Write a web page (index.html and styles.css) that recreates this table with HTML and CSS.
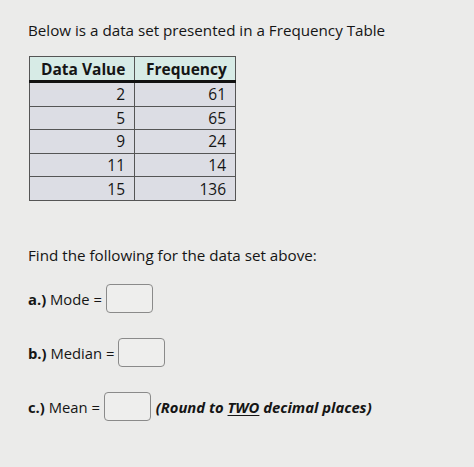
FILE: index.html
```html
<!DOCTYPE html>
<html>
<head>
<meta charset="utf-8">
<link rel="stylesheet" href="styles.css">
</head>
<body>
<div class="page">
  <p class="title">Below is a data set presented in a Frequency Table</p>
  <table class="freq">
    <colgroup><col class="c1"><col class="c2"></colgroup>
    <thead>
      <tr><th>Data Value</th><th>Frequency</th></tr>
    </thead>
    <tbody>
      <tr><td>2</td><td>61</td></tr>
      <tr><td>5</td><td>65</td></tr>
      <tr><td>9</td><td>24</td></tr>
      <tr><td>11</td><td>14</td></tr>
      <tr><td>15</td><td>136</td></tr>
    </tbody>
  </table>
  <p class="find">Find the following for the data set above:</p>
  <div class="q q-a"><b>a.)</b>&nbsp;Mode =&nbsp;<span class="box"></span></div>
  <div class="q q-b"><b>b.)</b>&nbsp;Median =&nbsp;<span class="box"></span></div>
  <div class="q q-c"><b>c.)</b>&nbsp;Mean =&nbsp;<span class="box"></span><span class="note">(Round to <u>TWO</u> decimal places)</span></div>
</div>
</body>
</html>
```
FILE: styles.css
```css
html, body {
  margin: 0;
  padding: 0;
  background: #ebebea;
}
body {
  font-family: "Open Sans", "Liberation Sans", sans-serif;
  color: #151515;
  width: 474px;
  height: 467px;
  overflow: hidden;
}
.page {
  padding: 18px 0 0 28px;
}
.title {
  margin: 0;
  font-size: 15.2px;
  line-height: 24px;
}
.freq {
  margin-top: 14px;
  margin-left: 1px;
  border-collapse: collapse;
  table-layout: fixed;
  width: 206px;
  font-size: 15.5px;
}
.freq .c1 { width: 105px; }
.freq .c2 { width: 101px; }
.freq th {
  background: #d7ebe6;
  font-weight: 700;
  height: 23px;
  padding: 0 6px 0 11px;
  border: 1px solid #555;
  border-bottom: 3px solid #111;
  text-align: left;
  line-height: 22px;
  white-space: nowrap;
}
.freq td {
  background: #dcdde4;
  border: 1px solid #555;
  text-align: right;
  padding: 0 9px 0 8px;
  height: 22.6px;
  line-height: 20px;
}
.find {
  margin: 42px 0 0;
  font-size: 15.2px;
  line-height: 24px;
}
.q {
  display: flex;
  align-items: center;
  font-size: 14.8px;
  height: 30px;
}
.q b { font-weight: 700; }
.q-a { margin-top: 17px; }
.q-b { margin-top: 24px; }
.q-c { margin-top: 24px; }
.box {
  display: inline-block;
  width: 45px;
  height: 27px;
  border: 1.5px solid #8a8a8a;
  border-radius: 4px;
  background: #eeeeed;
}
.note {
  margin-left: 5px;
  font-weight: 700;
  font-style: italic;
}
.note u {
  text-decoration-thickness: 1px;
  text-underline-offset: 2px;
}
```
